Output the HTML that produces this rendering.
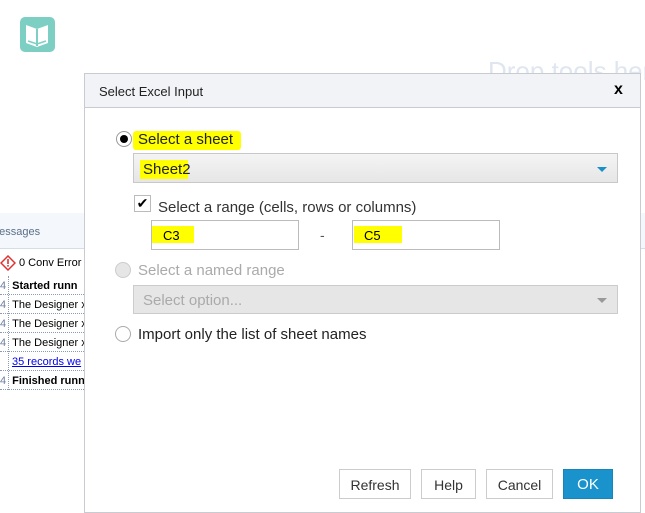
<!DOCTYPE html>
<html><head><style>
*{margin:0;padding:0;box-sizing:border-box}
body{width:645px;height:512px;position:relative;overflow:hidden;background:#fff;font-family:"Segoe UI","Liberation Sans",sans-serif;}
.a{position:absolute}
.hl{background:#ffff00;}
.radio{position:absolute;width:16px;height:16px;border-radius:50%;border:1px solid #aaa;background:#fff}
.btn{position:absolute;top:469px;height:30px;border:1px solid #ccc;background:#fff;font-size:14px;color:#333;text-align:center;line-height:30px}
.row{position:absolute;left:0;width:84px;height:19px;border-bottom:1px dotted #8a9bb5;font-size:11px;line-height:20px;white-space:nowrap;overflow:hidden}
.t{position:absolute;font-size:15px;line-height:20px;white-space:nowrap}
</style></head><body>
<div class="a" style="left:20px;top:17px;width:35px;height:35px;background:#7dcfc4;border-radius:5px"></div>
<svg class="a" style="left:20px;top:17px" width="35" height="35"><path d="M6 8 L17 12 L28 8 L28 26 L17 30 L6 26Z" fill="#fff"/><path d="M17 12 L17 29" stroke="#7dcfc4" stroke-width="2"/><path d="M8 24 L17 27 L26 24" stroke="#7dcfc4" stroke-width="1.5" fill="none"/></svg>
<div class="a" style="left:488px;top:56px;font-size:26px;color:#dfe6f0;white-space:nowrap">Drop tools here</div>
<div class="a" style="left:0;top:213px;width:645px;height:300px;background:#fff;border-top:1px solid #d5dde8"></div>
<div class="a" style="left:0;top:213px;width:645px;height:36px;border-bottom:1px solid #d5dde8;background:#f4f7fb"></div>
<div class="a" style="left:-10px;top:226px;font-size:11px;color:#5a6f8a">Messages</div>
<svg class="a" style="left:0;top:255px" width="16" height="16"><path d="M8 1 L15 8 L8 15 L1 8Z" fill="#fff" stroke="#d33" stroke-width="1.5"/><rect x="7.2" y="4" width="1.6" height="5" fill="#d33"/><rect x="7.2" y="10" width="1.6" height="1.6" fill="#d33"/></svg>
<div class="a" style="left:19px;top:257px;font-size:11px">0 Conv Error</div>
<div class="a" style="left:8px;top:276px;height:114px;border-left:1px dotted #8a9bb5"></div>
<div class="row" style="top:276px"><span style="color:#6a7fa0">4</span><b style="margin-left:6px">Started runn</b></div>
<div class="row" style="top:295px"><span style="color:#6a7fa0">4</span><span style="margin-left:6px">The Designer x</span></div>
<div class="row" style="top:314px"><span style="color:#6a7fa0">4</span><span style="margin-left:6px">The Designer x</span></div>
<div class="row" style="top:333px"><span style="color:#6a7fa0">4</span><span style="margin-left:6px">The Designer x</span></div>
<div class="row" style="top:352px"><span style="margin-left:12px;color:#00e;text-decoration:underline">35 records we</span></div>
<div class="row" style="top:371px"><span style="color:#6a7fa0">4</span><b style="margin-left:6px">Finished runn</b></div>

<div class="a" style="left:84px;top:73px;width:557px;height:440px;background:#fff;border:1px solid #c8ccd2"></div>
<div class="a" style="left:85px;top:74px;width:555px;height:34px;background:#f1f3f7;border-bottom:1px solid #c8ccd2"></div>
<div class="a" style="left:99px;top:84px;font-size:13px;color:#222">Select Excel Input</div>
<div class="a" style="left:614px;top:81px;font-size:16px;font-weight:bold">x</div>

<div class="radio" style="left:116px;top:131px;border-color:#999"><div class="a" style="left:3px;top:3px;width:8px;height:8px;border-radius:50%;background:#000"></div></div>
<div class="a hl" style="left:133px;top:131px;width:108px;height:19px;border-radius:3px"></div>
<div class="t" style="left:138px;top:130px;color:#222">Select a sheet</div>
<div class="a" style="left:133px;top:153px;width:485px;height:30px;border:1px solid #c8c8c8;background:linear-gradient(#f4f4f4,#e6e6e6)"></div>
<div class="a hl" style="left:140px;top:160px;width:48px;height:19px"></div>
<div class="t" style="left:143px;top:160px;color:#222">Sheet2</div>
<div class="a" style="left:597px;top:167px;border-left:5px solid transparent;border-right:5px solid transparent;border-top:5px solid #1a8fc9"></div>
<div class="a" style="left:134px;top:195px;width:17px;height:17px;border:1px solid #bbb;background:#fff;font-size:14px;line-height:14px;text-align:center">✔</div>
<div class="t" style="left:158px;top:198px;color:#333">Select a range (cells, rows or columns)</div>
<div class="a" style="left:151px;top:220px;width:148px;height:30px;border:1px solid #bbb"></div>
<div class="a hl" style="left:152px;top:226px;width:42px;height:17px"></div>
<div class="a" style="left:163px;top:228px;font-size:13px">C3</div>
<div class="a" style="left:320px;top:227px;font-size:14px;color:#555">-</div>
<div class="a" style="left:352px;top:220px;width:148px;height:30px;border:1px solid #bbb"></div>
<div class="a hl" style="left:354px;top:226px;width:48px;height:17px"></div>
<div class="a" style="left:364px;top:228px;font-size:13px">C5</div>

<div class="radio" style="left:115px;top:262px;background:#e6e6e6;border-color:#ccc"></div>
<div class="t" style="left:138px;top:261px;color:#aaa">Select a named range</div>
<div class="a" style="left:133px;top:285px;width:485px;height:29px;border:1px solid #ccc;background:#e6e6e6"></div>
<div class="t" style="left:143px;top:291px;color:#aaa">Select option...</div>
<div class="a" style="left:597px;top:298px;border-left:5px solid transparent;border-right:5px solid transparent;border-top:5px solid #999"></div>
<div class="radio" style="left:115px;top:326px"></div>
<div class="t" style="left:138px;top:325px;color:#222">Import only the list of sheet names</div>

<div class="btn" style="left:339px;width:72px">Refresh</div>
<div class="btn" style="left:421px;width:55px">Help</div>
<div class="btn" style="left:486px;width:67px">Cancel</div>
<div class="btn" style="left:563px;width:50px;background:#1a93cc;border-color:#1585bb;color:#fff;font-size:15px">OK</div>
</body></html>
